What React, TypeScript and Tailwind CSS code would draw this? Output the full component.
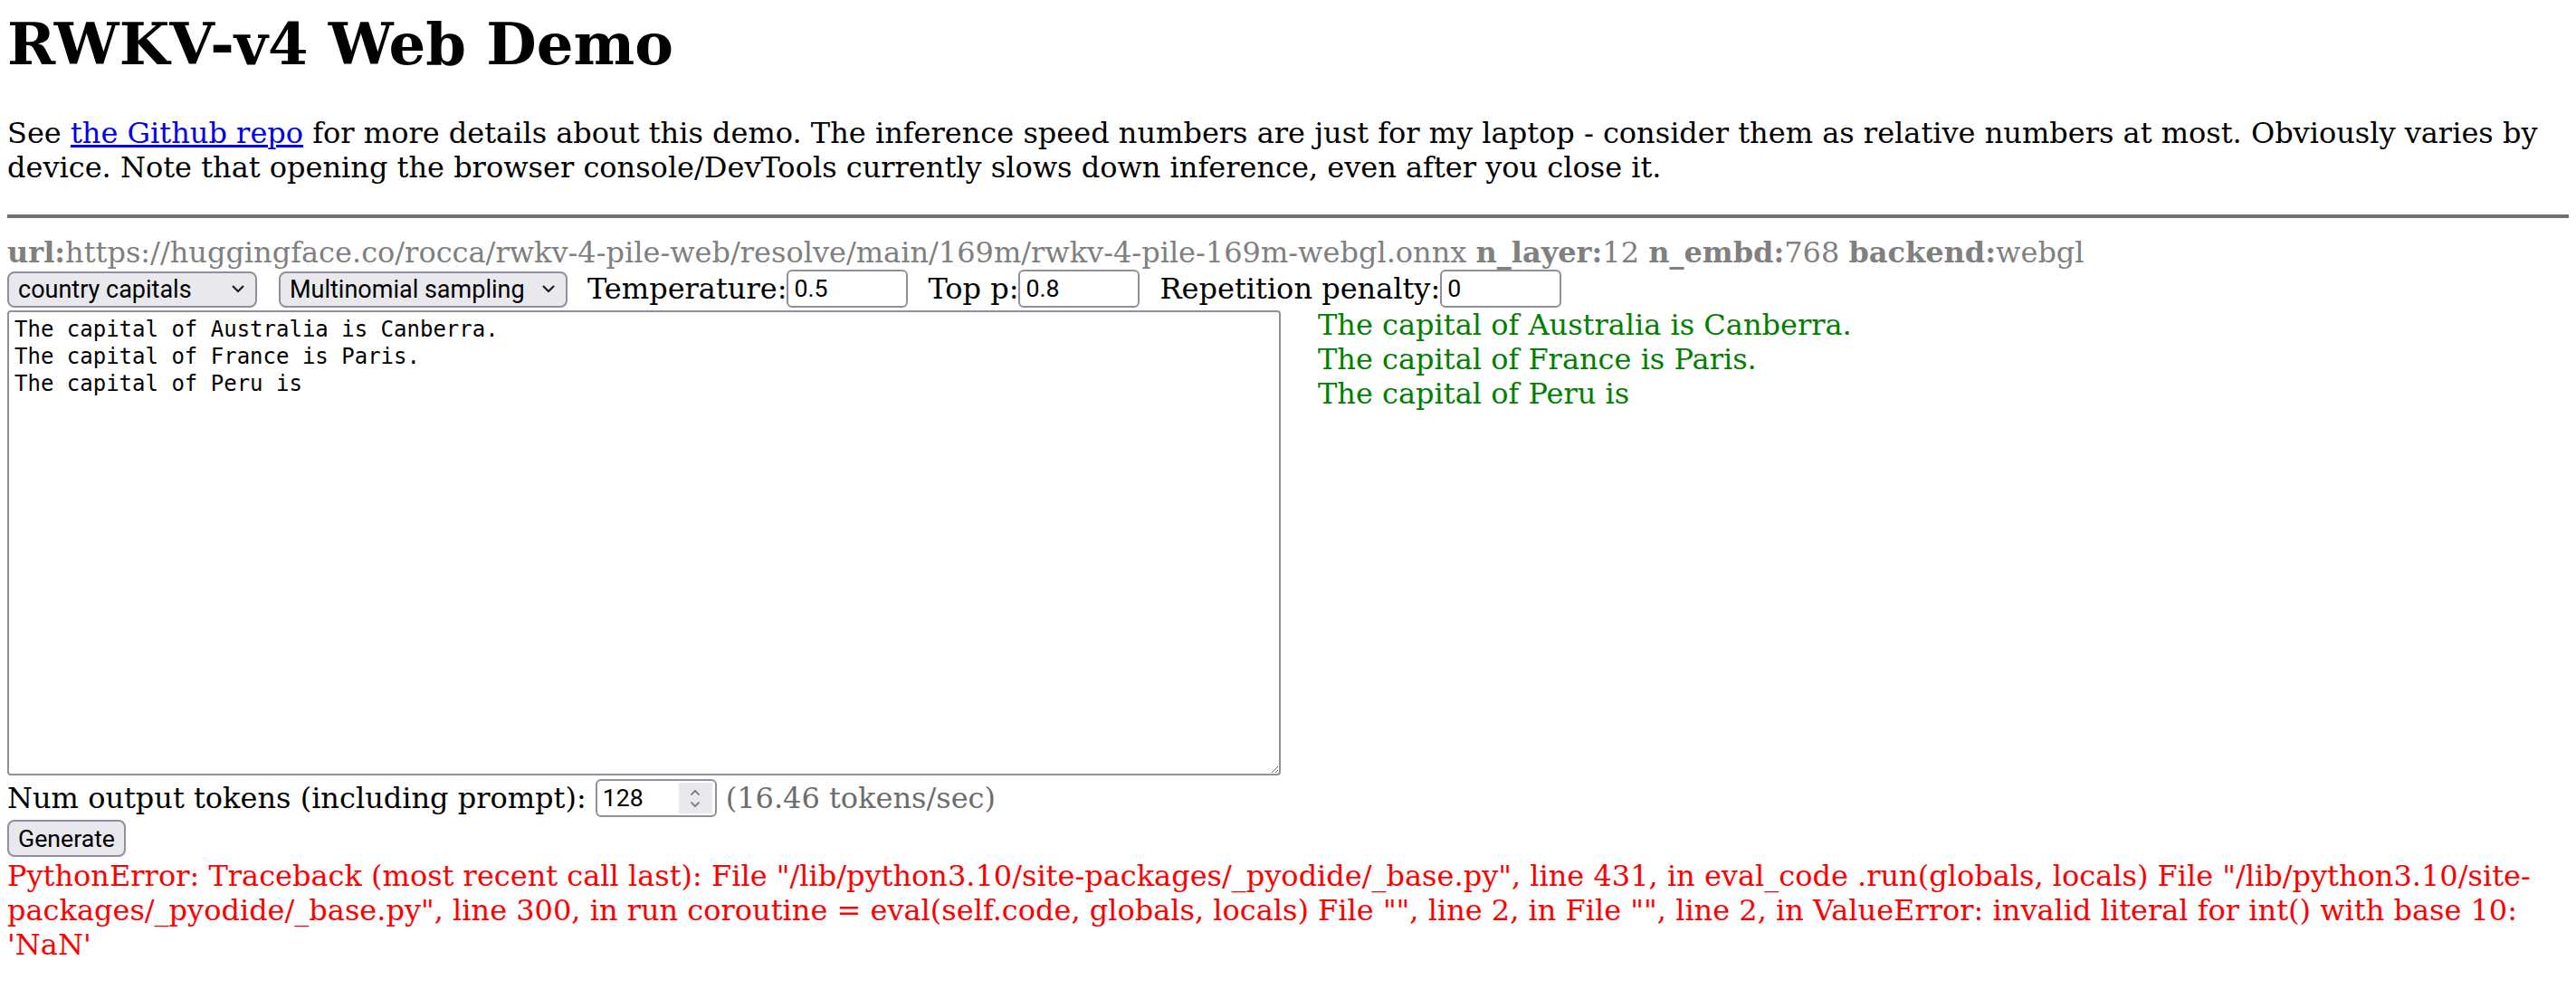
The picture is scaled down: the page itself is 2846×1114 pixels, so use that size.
import React from "react";

const Chevron = () => (
  <svg width="16" height="10" viewBox="0 0 16 10" className="pointer-events-none absolute right-[13px] top-1/2 -translate-y-1/2">
    <polyline points="2,2 8,8 14,2" fill="none" stroke="#1b1b1b" strokeWidth="2.2" />
  </svg>
);

function Select({ width, value }: { width: string; value: string }) {
  return (
    <div className={`relative h-[40px] ${width}`}>
      <select
        defaultValue={value}
        className="h-full w-full appearance-none rounded-[8px] border-2 border-[#8f8f9d] bg-[#e9e9ed] pl-[10px] font-['Roboto',sans-serif] text-[27px] text-black"
      >
        <option>{value}</option>
      </select>
      <Chevron />
    </div>
  );
}

function Field({ value }: { value: string }) {
  return (
    <input
      defaultValue={value}
      className="h-[42px] w-[134px] rounded-[6px] border-2 border-[#8f8f9d] bg-white pl-[6px] font-['Roboto',sans-serif] text-[26.67px] text-black"
    />
  );
}

export default function App() {
  return (
    <div className="min-h-screen bg-white px-[8px] font-['DejaVu_Serif',serif] text-[32px] leading-[normal] text-black">
      <h1 className="pt-[11px] text-[64px] font-bold leading-[normal]">RWKV-v4 Web Demo</h1>

      <p className="mt-[42px]">
        See{" "}
        <a className="text-[#0000ee] underline" href="#">
          the Github repo
        </a>{" "}
        for more details about this demo. The inference speed numbers are just for my laptop - consider them as
        relative numbers at most. Obviously varies by device. Note that opening the browser console/DevTools currently
        slows down inference, even after you close it.
      </p>

      <hr className="mt-[33px] h-[4px] border-0 bg-[#6f6f6f]" />

      <div className="mt-[19px] text-[#808080]">
        <b>url:</b>https://huggingface.co/rocca/rwkv-4-pile-web/resolve/main/169m/rwkv-4-pile-169m-webgl.onnx{" "}
        <b>n_layer:</b>12 <b>n_embd:</b>768 <b>backend:</b>webgl
      </div>

      <div className="flex h-[42px] items-center">
        <Select width="w-[276px]" value="country capitals" />
        <div className="ml-[24px]">
          <Select width="w-[319px]" value="Multinomial sampling" />
        </div>
        <span className="ml-[22px]">Temperature:</span>
        <Field value="0.5" />
        <span className="ml-[22px]">Top p:</span>
        <Field value="0.8" />
        <span className="ml-[22px]">Repetition penalty:</span>
        <Field value="0" />
      </div>

      <div className="mt-[3px] flex items-start">
        <textarea
          defaultValue={"The capital of Australia is Canberra.\nThe capital of France is Paris.\nThe capital of Peru is"}
          className="h-[514px] w-[1407px] resize rounded-[4px] border-2 border-[#8f8f9d] bg-white px-[6px] py-[4px] font-['DejaVu_Sans_Mono',monospace] text-[24px] leading-[30px] text-black"
        />
        <div className="-mt-[3px] ml-[41px] text-[#008000]">
          <div>The capital of Australia is Canberra.</div>
          <div>The capital of France is Paris.</div>
          <div>The capital of Peru is</div>
        </div>
      </div>

      <div className="mt-[4px] flex h-[42px] items-center">
        <span>Num output tokens (including prompt):</span>
        <div className="relative ml-[10px]">
          <Field value="128" />
          <div className="pointer-events-none absolute right-[5px] top-[4px] flex h-[34px] w-[37px] flex-col items-center justify-center gap-[5px] bg-[#e9e9ed]">
            <svg width="12" height="8" viewBox="0 0 12 8">
              <polyline points="1.5,6.5 6,2 10.5,6.5" fill="none" stroke="#6b6b6b" strokeWidth="1.6" />
            </svg>
            <svg width="12" height="8" viewBox="0 0 12 8">
              <polyline points="1.5,1.5 6,6 10.5,1.5" fill="none" stroke="#6b6b6b" strokeWidth="1.6" />
            </svg>
          </div>
        </div>
        <span className="ml-[10px] text-[#6d6d6d]">(16.46 tokens/sec)</span>
      </div>

      <button className="mt-[3px] h-[41px] w-[131px] rounded-[8px] border-2 border-[#8f8f9d] bg-[#e9e9ed] font-['Roboto',sans-serif] text-[26.67px] text-black">
        Generate
      </button>

      <div className="mt-[2px] text-[#ff0000]">
        PythonError: Traceback (most recent call last): File "/lib/python3.10/site-packages/_pyodide/_base.py", line
        431, in eval_code .run(globals, locals) File "/lib/python3.10/site-packages/_pyodide/_base.py", line 300, in
        run coroutine = eval(self.code, globals, locals) File "", line 2, in File "", line 2, in ValueError: invalid
        literal for int() with base 10: 'NaN'
      </div>
    </div>
  );
}
